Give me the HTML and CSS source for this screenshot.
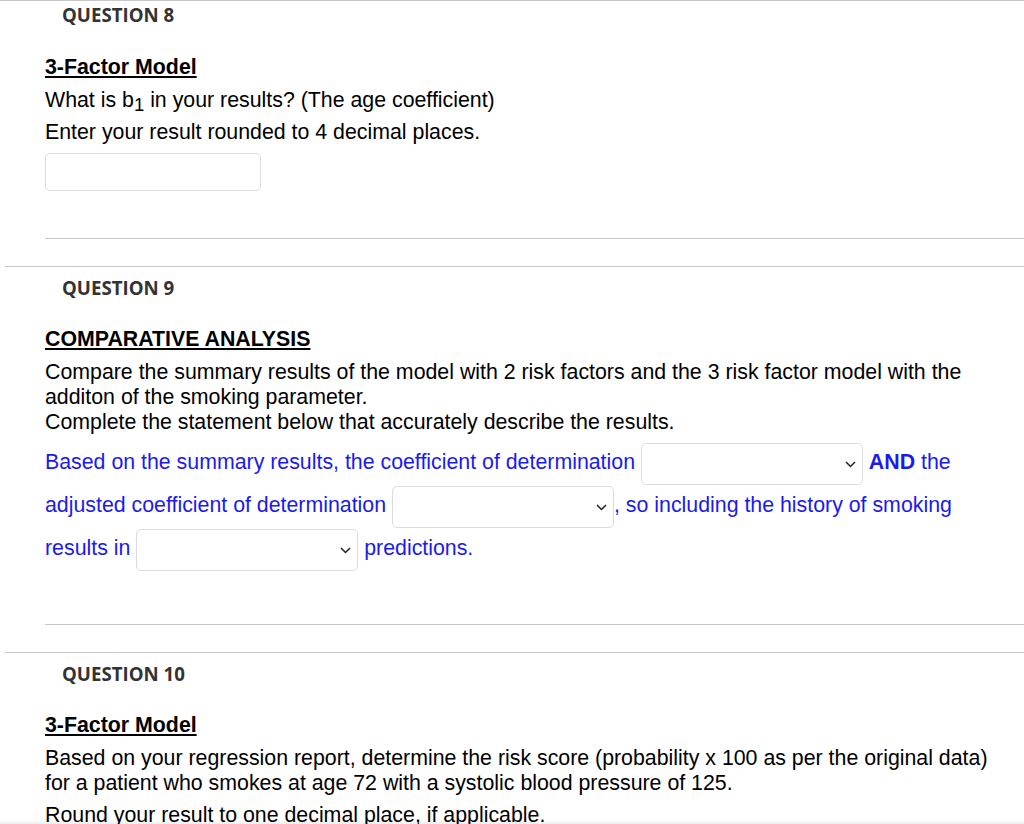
FILE: index.html
```html
<!DOCTYPE html>
<html lang="en">
<head>
<meta charset="utf-8">
<title>Questions</title>
<link rel="stylesheet" href="styles.css">
</head>
<body>
<div class="topline"></div>

<section class="question q-first">
  <h2 class="q-head">QUESTION 8</h2>
  <div class="q-body">
    <div class="q-text">
      <p class="q-title">3-Factor Model</p>
      <p>What is b<span class="sub">1</span> in your results? (The age coefficient)</p>
      <p>Enter your result rounded to 4 decimal places.</p>
      <input class="answer" type="text" aria-label="Answer">
    </div>
    <hr class="q-rule">
  </div>
</section>

<section class="question">
  <h2 class="q-head">QUESTION 9</h2>
  <div class="q-body">
    <div class="q-text">
      <p class="q-title">COMPARATIVE ANALYSIS</p>
      <p class="q-lead">Compare the summary results of the model with 2 risk factors and the 3 risk factor model with the additon of the smoking parameter.<br>Complete the statement below that accurately describe the results.</p>
      <p class="fill">Based on the summary results, the coefficient of determination <span class="sel"><select aria-label="Blank 1"><option></option></select><svg class="chev" width="11" height="7" viewBox="0 0 11 7"><path d="M1 1 L5.5 5.5 L10 1"/></svg></span> <b>AND</b> the adjusted coefficient of determination <span class="sel"><select aria-label="Blank 2"><option></option></select><svg class="chev" width="11" height="7" viewBox="0 0 11 7"><path d="M1 1 L5.5 5.5 L10 1"/></svg></span>, so including the history of smoking results in <span class="sel"><select aria-label="Blank 3"><option></option></select><svg class="chev" width="11" height="7" viewBox="0 0 11 7"><path d="M1 1 L5.5 5.5 L10 1"/></svg></span> predictions.</p>
    </div>
    <hr class="q-rule">
  </div>
</section>

<section class="question">
  <h2 class="q-head">QUESTION 10</h2>
  <div class="q-body">
    <div class="q-text">
      <p class="q-title">3-Factor Model</p>
      <p>Based on your regression report, determine the risk score (probability x 100 as per the original data) for a patient who smokes at age 72 with a systolic blood pressure of 125.</p>
      <p>Round your result to one decimal place, if applicable.</p>
      <input class="answer" type="text" aria-label="Answer">
    </div>
    <hr class="q-rule">
  </div>
</section>

<div class="bottom-shade"></div>
</body>
</html>
```

FILE: styles.css
```css
html, body {
  margin: 0;
  padding: 0;
  background: #ffffff;
}

body {
  overflow: hidden;
  font-family: "Liberation Sans", Arial, sans-serif;
}

.topline {
  height: 0;
  border-top: 1px solid #c6c6c6;
}

.question {
  margin-left: 5px;
  border-top: 1px solid #c6c6c6;
}

.q-first {
  border-top: none;
}

.q-head {
  margin: 0;
  padding: 8px 0 0 57px;
  font-family: "Open Sans", sans-serif;
  font-weight: 700;
  font-size: 18.67px;
  line-height: normal;
  color: #333333;
}

.q-first .q-head {
  padding-top: 1px;
}

.q-body {
  margin-left: 40px;
  padding-top: 27px;
}

.q-first .q-body {
  padding-top: 28px;
}

.q-text {
  max-width: 965px;
  padding-bottom: 47px;
  font-family: "Liberation Sans", Arial, sans-serif;
  font-size: 21.33px;
  line-height: 25px;
  color: #000000;
}

.q-text p {
  margin: 0 0 6.5px;
}

.q-text .q-title {
  font-weight: 700;
  text-decoration: underline;
  text-underline-offset: 2px;
  margin-bottom: 8px;
}

.sub {
  font-size: 18.5px;
  line-height: 0;
  vertical-align: -4px;
}

.q-text .q-lead {
  margin-bottom: 7px;
}

.answer {
  display: block;
  box-sizing: border-box;
  width: 216px;
  height: 38.5px;
  margin: 8px 0 0;
  border: 1px solid #dedede;
  border-radius: 5px;
  background: #ffffff;
  padding: 0 8px;
  font: inherit;
}

.fill {
  color: #1a1af0;
  line-height: normal;
}

.q-text .fill {
  margin-bottom: 6px;
}

.fill b {
  font-weight: 700;
}

.sel {
  position: relative;
  display: inline-block;
  vertical-align: middle;
  margin: 0.5px 0;
  width: 222px;
  height: 42px;
}

.sel select {
  display: block;
  box-sizing: border-box;
  width: 100%;
  height: 100%;
  margin: 0;
  padding: 0 28px 0 10px;
  border: 1px solid #dcdcdc;
  border-radius: 5px;
  background: #ffffff;
  -webkit-appearance: none;
  appearance: none;
  font: inherit;
  color: #000;
}

.chev {
  position: absolute;
  right: 7px;
  top: 18px;
  fill: none;
  stroke: #222222;
  stroke-width: 1.5;
  pointer-events: none;
}

.q-rule {
  margin: 0 0 27px;
  height: 0;
  border: 0;
  border-top: 1px solid #c6c6c6;
}

.bottom-shade {
  position: fixed;
  left: 0;
  right: 0;
  bottom: 0;
  height: 4px;
  background: linear-gradient(rgba(0,0,0,0), rgba(0,0,0,0.07));
  pointer-events: none;
}
```
